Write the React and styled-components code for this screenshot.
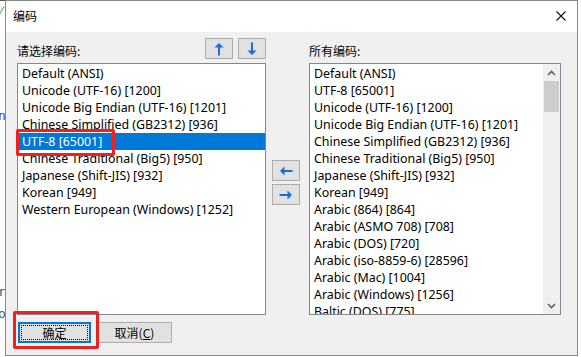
import styled, { createGlobalStyle } from "styled-components"

const leftItems = [
    "Default (ANSI)",
    "Unicode (UTF-16) [1200]",
    "Unicode Big Endian (UTF-16) [1201]",
    "Chinese Simplified (GB2312) [936]",
    "UTF-8 [65001]",
    "Chinese Traditional (Big5) [950]",
    "Japanese (Shift-JIS) [932]",
    "Korean [949]",
    "Western European (Windows) [1252]",
]

const rightItems = [
    "Default (ANSI)",
    "UTF-8 [65001]",
    "Unicode (UTF-16) [1200]",
    "Unicode Big Endian (UTF-16) [1201]",
    "Chinese Simplified (GB2312) [936]",
    "Chinese Traditional (Big5) [950]",
    "Japanese (Shift-JIS) [932]",
    "Korean [949]",
    "Arabic (864) [864]",
    "Arabic (ASMO 708) [708]",
    "Arabic (DOS) [720]",
    "Arabic (iso-8859-6) [28596]",
    "Arabic (Mac) [1004]",
    "Arabic (Windows) [1256]",
    "Baltic (DOS) [775]",
]

function Arrow({ dir }) {
    const rot = { up: 0, down: 180, left: 270, right: 90 }[dir]
    return (
        <svg width="14" height="14" viewBox="0 0 14 14" style={{ transform: `rotate(${rot}deg)` }}>
            <path d="M7 1 L2.5 5.5 L11.5 5.5 Z" fill="#1a6fe0" />
            <rect x="6" y="5" width="2" height="8.5" fill="#1a6fe0" />
        </svg>
    )
}

function Chevron({ down }) {
    return (
        <svg width="9" height="6" viewBox="0 0 9 6">
            <polyline
                points={down ? "1,1 4.5,4.5 8,1" : "1,5 4.5,1.5 8,5"}
                fill="none"
                stroke="#606060"
                strokeWidth="1.6"
            />
        </svg>
    )
}

export default function App() {
    return (
        <>
            <GlobalStyle />
            <Page>
                <BackStrip>
                    <Check>✓</Check>
                    <Frag $top={108} $color="#3a3ad0">n</Frag>
                    <Frag $top={284} $color="#555">r</Frag>
                    <Frag $top={306} $color="#555">o</Frag>
                </BackStrip>
                <Dialog>
                    <TitleBar>
                        <Title>编码</Title>
                        <Close>
                            <svg width="10" height="10" viewBox="0 0 10 10">
                                <path d="M0.5 0.5 L9.5 9.5 M9.5 0.5 L0.5 9.5" stroke="#111" strokeWidth="1.1" />
                            </svg>
                        </Close>
                    </TitleBar>
                    <Body>
                        <Columns>
                            <Column>
                                <Header>
                                    <Label>请选择编码:</Label>
                                    <SmallButtons>
                                        <IconButton><Arrow dir="up" /></IconButton>
                                        <IconButton><Arrow dir="down" /></IconButton>
                                    </SmallButtons>
                                </Header>
                                <ListBox>
                                    <Rows>
                                        {leftItems.map((t, i) => (
                                            <Row key={t} $selected={i === 4}>{t}</Row>
                                        ))}
                                    </Rows>
                                </ListBox>
                            </Column>
                            <Middle>
                                <IconButton><Arrow dir="left" /></IconButton>
                                <IconButton><Arrow dir="right" /></IconButton>
                            </Middle>
                            <Column>
                                <Header>
                                    <Label>所有编码:</Label>
                                </Header>
                                <ListBox>
                                    <Rows>
                                        {rightItems.map((t) => (
                                            <Row key={t}>{t}</Row>
                                        ))}
                                    </Rows>
                                    <ScrollBar>
                                        <ScrollArrow><Chevron /></ScrollArrow>
                                        <Track>
                                            <Thumb />
                                        </Track>
                                        <ScrollArrow><Chevron down /></ScrollArrow>
                                    </ScrollBar>
                                </ListBox>
                            </Column>
                        </Columns>
                        <Footer>
                            <Button $focused>
                                <FocusRing>确定</FocusRing>
                            </Button>
                            <Button $width={75}>取消(<u>C</u>)</Button>
                        </Footer>
                    </Body>
                    <Mark $x={10} $y={128} $w={99} $h={27} />
                    <Mark $x={7} $y={310} $w={86} $h={38} />
                </Dialog>
            </Page>
        </>
    )
}

const GlobalStyle = createGlobalStyle`
    html, body {
        margin: 0;
        padding: 0;
        background: #ffffff;
        overflow: hidden;
    }
    body {
        font-family: "Noto Sans", "Noto Sans CJK SC", sans-serif;
        font-size: 12px;
        color: #000;
    }
`

const Page = styled.div`
    display: flex;
    width: 581px;
    height: 357px;
    background: #ffffff;
`

const BackStrip = styled.div`
    position: relative;
    width: 5px;
    flex-shrink: 0;
    overflow: hidden;
    border-top: 1px solid #555;
`

const Check = styled.span`
    position: absolute;
    top: 4px;
    left: -3px;
    color: #2a9a3a;
    font-size: 11px;
    line-height: 1;
`

const Frag = styled.span`
    position: absolute;
    top: ${(p) => p.$top}px;
    left: -2px;
    color: ${(p) => p.$color};
    font-family: "DejaVu Sans Mono", monospace;
    font-size: 13px;
    line-height: 1;
`

const Dialog = styled.div`
    position: relative;
    width: 571px;
    height: 354px;
    border: 1px solid #8a8a8a;
    background: #f0f0f0;
    display: flex;
    flex-direction: column;
`

const TitleBar = styled.div`
    height: 31px;
    background: #ffffff;
    display: flex;
    align-items: center;
    justify-content: space-between;
    padding: 0 11px 0 7px;
`

const Title = styled.div`
    font-family: "Noto Sans CJK SC", sans-serif;
    font-size: 12px;
    margin-top: -2px;
`

const Close = styled.div`
    display: flex;
    margin-top: -2px;
`

const Body = styled.div`
    display: flex;
    flex-direction: column;
    padding: 6px 0 0 11px;
`

const Columns = styled.div`
    display: grid;
    grid-template-columns: 249px 28px 255px;
    column-gap: 6px;
    & > :nth-child(3) {
        margin-left: 3px;
    }
`

const Column = styled.div`
    display: flex;
    flex-direction: column;
`

const Header = styled.div`
    height: 20px;
    display: flex;
    align-items: flex-end;
    justify-content: space-between;
    margin-bottom: 5px;
`

const Label = styled.div`
    font-family: "Noto Sans CJK SC", sans-serif;
    font-size: 12px;
    line-height: 14px;
    color: #000;
`

const SmallButtons = styled.div`
    display: flex;
    gap: 5px;
    align-self: flex-start;
`

const IconButton = styled.div`
    width: 26px;
    height: 19px;
    border: 1px solid #adadad;
    background: #e1e1e1;
    display: flex;
    align-items: center;
    justify-content: center;
`

const Middle = styled.div`
    display: flex;
    flex-direction: column;
    gap: 3px;
    padding-top: 122px;
`

const ListBox = styled.div`
    height: 250px;
    border: 1px solid #828790;
    background: #ffffff;
    display: flex;
    overflow: hidden;
`

const Rows = styled.div`
    flex: 1;
    padding-top: 1px;
    overflow: hidden;
`

const Row = styled.div`
    height: 17px;
    line-height: 17px;
    padding-left: 4px;
    white-space: nowrap;
    font-family: "Noto Sans", sans-serif;
    font-size: 12.4px;
    background: ${(p) => (p.$selected ? "#0078d7" : "transparent")};
    color: ${(p) => (p.$selected ? "#ffffff" : "#000000")};
`

const ScrollBar = styled.div`
    width: 17px;
    background: #f0f0f0;
    display: flex;
    flex-direction: column;
`

const ScrollArrow = styled.div`
    height: 17px;
    display: flex;
    align-items: center;
    justify-content: center;
`

const Track = styled.div`
    flex: 1;
    padding: 0 1px;
`

const Thumb = styled.div`
    height: 31px;
    background: #cdcdcd;
`

const Footer = styled.div`
    display: flex;
    gap: 6px;
    margin-top: 7px;
    padding-left: 1px;
`

const Button = styled.div`
    box-sizing: border-box;
    width: ${(p) => p.$width || 73}px;
    height: 21px;
    background: #e1e1e1;
    border: ${(p) => (p.$focused ? "2px solid #0078d7" : "1px solid #adadad")};
    display: flex;
    align-items: center;
    justify-content: center;
    font-family: "Noto Sans CJK SC", sans-serif;
    font-size: 12px;
    padding: ${(p) => (p.$focused ? "1px" : "0")};
    u {
        text-underline-offset: 1px;
    }
`

const FocusRing = styled.div`
    flex: 1;
    align-self: stretch;
    border: 1px dotted #000;
    display: flex;
    align-items: center;
    justify-content: center;
`

const Mark = styled.div`
    position: absolute;
    left: ${(p) => p.$x}px;
    top: ${(p) => p.$y}px;
    width: ${(p) => p.$w}px;
    height: ${(p) => p.$h}px;
    box-sizing: border-box;
    border: 3px solid #f02020;
    border-radius: 2px;
    pointer-events: none;
`
